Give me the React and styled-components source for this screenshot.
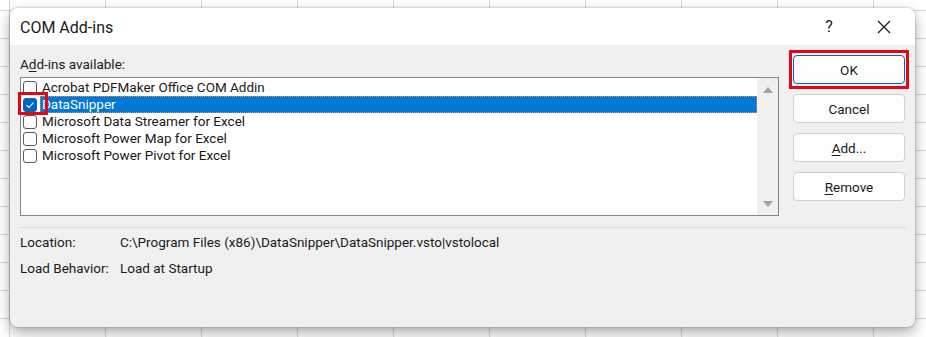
import styled, { createGlobalStyle } from 'styled-components';

const GlobalStyle = createGlobalStyle`
  html, body {
    margin: 0;
    padding: 0;
  }

  body {
    width: 926px;
    height: 337px;
    overflow: hidden;
    font-family: Roboto, 'Noto Sans', 'Liberation Sans', sans-serif;
    color: #1a1a1a;
    background-color: #ffffff;
    background-image:
      linear-gradient(to right, #d6d6d6 1px, transparent 1px),
      linear-gradient(to bottom, #d6d6d6 1px, transparent 1px);
    background-size: 96px 28px;
    background-position: 9px 10px;
  }
`;

const Screen = styled.div`
  padding: 8px 11px 0 10px;
`;

const Dialog = styled.div`
  width: 905px;
  height: 319px;
  display: flex;
  flex-direction: column;
  background: #f0f0f0;
  border-radius: 8px;
  overflow: hidden;
  box-shadow: 0 6px 14px rgba(0, 0, 0, 0.32), 0 0 3px rgba(0, 0, 0, 0.28);
`;

const TitleBar = styled.div`
  height: 37px;
  display: flex;
  align-items: center;
  background: #ffffff;
  padding-left: 10px;

  .title {
    font-size: 16px;
    flex: 1;
    padding-top: 2px;
  }
`;

const TitleButton = styled.div`
  width: ${(p) => p.$w}px;
  height: 37px;
  display: flex;
  align-items: center;
  justify-content: center;
  font-size: 16px;
  color: #1a1a1a;
`;

const Body = styled.div`
  display: flex;
  gap: 14px;
  padding: 10px 10px 0 10px;
`;

const LeftColumn = styled.div`
  flex: 1;
  display: flex;
  flex-direction: column;
`;

const Label = styled.div`
  font-size: 13.5px;
  line-height: 19px;
  margin: 0 0 3px;

  u {
    text-decoration-thickness: 1px;
    text-underline-offset: 2px;
  }
`;

const ListBox = styled.div`
  height: 139px;
  border: 1px solid #828790;
  display: flex;
  background: #ffffff;
  box-sizing: border-box;
`;

const Rows = styled.ul`
  flex: 1;
  list-style: none;
  margin: 0;
  padding: 1px 0 0 2px;
`;

const Row = styled.li`
  height: 17px;
  display: flex;
  align-items: center;
  font-size: 13.5px;
  position: relative;

  .text {
    flex: 1;
    height: 17px;
    line-height: 17px;
    margin-left: 3px;
    padding-left: 2px;
    color: ${(p) => (p.$selected ? '#ffffff' : '#1a1a1a')};
    background: ${(p) => (p.$selected ? '#0078d7' : 'transparent')};
    outline: ${(p) => (p.$selected ? '1px dotted #ff8c28' : 'none')};
    outline-offset: -1px;
  }
`;

const Check = styled.span`
  width: 14px;
  height: 14px;
  box-sizing: border-box;
  border-radius: 3px;
  border: 1px solid ${(p) => (p.$checked ? '#0067c0' : '#5a5a5a')};
  background: ${(p) => (p.$checked ? '#0067c0' : '#fdfdfd')};
  display: flex;
  align-items: center;
  justify-content: center;
  flex-shrink: 0;
`;

const Highlight = styled.div`
  position: absolute;
  left: ${(p) => p.$l}px;
  top: ${(p) => p.$t}px;
  width: ${(p) => p.$w}px;
  height: ${(p) => p.$h}px;
  border: 3px solid #e30613;
  box-sizing: border-box;
  pointer-events: none;
`;

const ScrollBar = styled.div`
  width: 21px;
  background: #f0f0f0;
  display: flex;
  flex-direction: column;
  justify-content: space-between;
  align-items: center;
  padding: 9px 0 8px;
`;

const Arrow = styled.span`
  width: 0;
  height: 0;
  border-left: 5px solid transparent;
  border-right: 5px solid transparent;
  ${(p) =>
    p.$down ? 'border-top: 6px solid #a3a3a3;' : 'border-bottom: 6px solid #a3a3a3;'}
`;

const ButtonColumn = styled.div`
  width: 112px;
  display: flex;
  flex-direction: column;
  gap: 10px;
`;

const ButtonWrap = styled.div`
  position: relative;
`;

const Button = styled.button`
  width: 112px;
  height: 29px;
  box-sizing: border-box;
  border-radius: 4px;
  border: 1px solid ${(p) => (p.$primary ? '#0067c0' : '#d0d0d0')};
  background: #fdfdfd;
  font-family: inherit;
  font-size: 13.5px;
  color: #1a1a1a;
  padding: 0;

  u {
    text-underline-offset: 2px;
  }
`;

const Separator = styled.div`
  height: 1px;
  background: #d9d9d9;
  margin: 11px 9px 0 10px;
`;

const Info = styled.div`
  padding: 1px 10px 0;
  display: flex;
  flex-direction: column;
`;

const InfoRow = styled.div`
  display: flex;
  height: 26px;
  align-items: center;
  font-size: 13.5px;

  .key {
    width: 100px;
  }
`;

const items = [
  { name: 'Acrobat PDFMaker Office COM Addin', checked: false },
  { name: 'DataSnipper', checked: true, selected: true },
  { name: 'Microsoft Data Streamer for Excel', checked: false },
  { name: 'Microsoft Power Map for Excel', checked: false },
  { name: 'Microsoft Power Pivot for Excel', checked: false },
];

const App = () => {
  return (
    <>
      <GlobalStyle />
      <Screen>
        <Dialog>
          <TitleBar>
            <span className="title">COM Add-ins</span>
            <TitleButton $w={48}>?</TitleButton>
            <TitleButton $w={62}>
              <svg width="14" height="14" viewBox="0 0 14 14">
                <path d="M1 1 L13 13 M13 1 L1 13" stroke="#1a1a1a" strokeWidth="1.2" />
              </svg>
            </TitleButton>
          </TitleBar>
          <Body>
            <LeftColumn>
              <Label>
                A<u>d</u>d-ins available:
              </Label>
              <ListBox>
                <Rows>
                  {items.map((item) => (
                    <Row key={item.name} $selected={item.selected}>
                      <Check $checked={item.checked}>
                        {item.checked && (
                          <svg width="10" height="10" viewBox="0 0 10 10">
                            <path d="M1.5 5.2 L4 7.5 L8.5 2.5" fill="none" stroke="#ffffff" strokeWidth="1.1" />
                          </svg>
                        )}
                      </Check>
                      <span className="text">{item.name}</span>
                      {item.checked && <Highlight $l={-5} $t={-4} $w={30} $h={23} />}
                    </Row>
                  ))}
                </Rows>
                <ScrollBar>
                  <Arrow />
                  <Arrow $down />
                </ScrollBar>
              </ListBox>
            </LeftColumn>
            <ButtonColumn>
              <ButtonWrap>
                <Button $primary>OK</Button>
                <Highlight $l={-4} $t={-5} $w={120} $h={39} />
              </ButtonWrap>
              <Button>Cancel</Button>
              <Button>
                <u>A</u>dd...
              </Button>
              <Button>
                <u>R</u>emove
              </Button>
            </ButtonColumn>
          </Body>
          <Separator />
          <Info>
            <InfoRow>
              <span className="key">Location:</span>
              <span>C:\Program Files (x86)\DataSnipper\DataSnipper.vsto|vstolocal</span>
            </InfoRow>
            <InfoRow>
              <span className="key">Load Behavior:</span>
              <span>Load at Startup</span>
            </InfoRow>
          </Info>
        </Dialog>
      </Screen>
    </>
  );
};

export default App;
